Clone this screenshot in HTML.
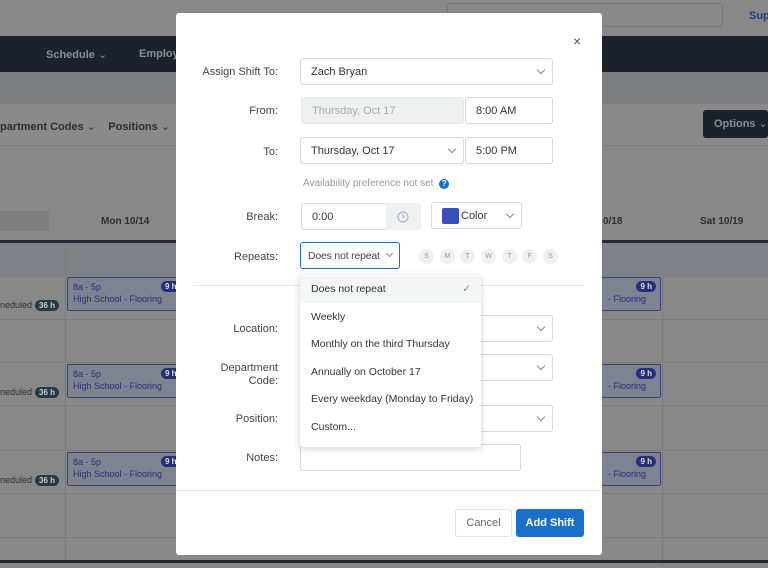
<!DOCTYPE html>
<html><head><style>
*{box-sizing:border-box;margin:0;padding:0}
body{width:768px;height:568px;position:relative;overflow:hidden;background:#888;font-family:"Liberation Sans",sans-serif;font-size:11px;color:#333}
.abs{position:absolute}
.bg{color:#2a2f36}
.inp{position:absolute;border:1px solid #d6d8db;border-radius:3px;background:#fff;height:27px;padding:0 10px;line-height:26px;font-size:11px;color:#333}
.lbl{position:absolute;right:0;text-align:right;font-size:11px;color:#444}
.chev{position:absolute;right:8px;top:8px;width:6px;height:6px;border-right:1px solid #888;border-bottom:1px solid #888;transform:rotate(45deg)}
.day{position:absolute;top:236px;width:15px;height:15px;border-radius:50%;background:#eef0f2;color:#999;font-size:7px;text-align:center;line-height:15px}
.opt{position:absolute;left:0;width:181px;height:27px;padding-left:11px;line-height:27px;font-size:10.5px;color:#333}
.shift{position:absolute;width:124px;height:34px;border:1px solid #3a4480;border-radius:2px;background:#7f8290;font-size:9px;color:#26307a;padding:3px 5px;line-height:12px}
.shift b{position:absolute;left:93px;top:3px;background:#26307a;color:#ddd;border-radius:7px;padding:0 4px;font-size:8px;line-height:11px}
.shift.r b{left:auto;right:4px}
.sch{position:absolute;left:0;font-size:9px;color:#2a2f36}
.sch b{background:#243a44;color:#ccc;border-radius:7px;padding:1px 4px;font-size:8px;margin-left:3px}
</style></head><body>
<div class="abs" style="left:447px;top:3px;width:276px;height:24px;border:1px solid #777;border-radius:3px"></div>
<div class="abs" style="left:749px;top:10px;color:#1f3a8a;font-size:11px;font-weight:bold">Sup</div>
<div class="abs" style="left:0;top:36px;width:768px;height:36px;background:#1c222b"></div>
<div class="abs" style="left:46px;top:48px;color:#8a8d92;font-size:11px;font-weight:bold">Schedule <span style="font-weight:normal">&#8964;</span></div>
<div class="abs" style="left:139px;top:48px;color:#8a8d92;font-size:11px;font-weight:bold">Employ</div>
<div class="abs" style="left:68px;top:72px;width:0;height:0;border-left:10px solid transparent;border-right:10px solid transparent;border-top:8px solid #1c222b"></div>
<div class="abs" style="left:0;top:72px;width:768px;height:32px;background:#7d7f82"></div>
<div class="abs" style="left:0;top:104px;width:768px;height:42px;background:#8a8a8a;border-bottom:1px solid #7e7e7e"></div>
<div class="abs bg" style="left:0;top:120px;font-size:11px;font-weight:bold">partment Codes <span style="font-weight:normal">&#8964;</span>&nbsp;&nbsp;&nbsp; Positions <span style="font-weight:normal">&#8964;</span></div>
<div class="abs" style="left:703px;top:110px;width:65px;height:28px;background:#1c222b;border-radius:3px;color:#8a8d92;font-size:11px;font-weight:bold;line-height:28px;padding-left:11px">Options <span style="font-weight:normal">&#8964;</span></div>
<div class="abs" style="left:0;top:211px;width:49px;height:20px;background:#7d7e80"></div>
<div class="abs bg" style="left:101px;top:216px;font-weight:bold;font-size:10px">Mon 10/14</div>
<div class="abs bg" style="left:603px;top:216px;font-weight:bold;font-size:10px">0/18</div>
<div class="abs bg" style="left:700px;top:216px;font-weight:bold;font-size:10px">Sat 10/19</div>
<div class="abs" style="left:0;top:240px;width:768px;height:3px;background:#222a33"></div>
<div class="abs" style="left:0;top:243px;width:768px;height:34px;background:#7f8186"></div>
<div class="abs" style="left:65px;top:243px;width:1px;height:320px;background:#7a7a7a"></div>
<div class="abs" style="left:662px;top:277px;width:1px;height:290px;background:#7a7a7a"></div>
<div class="abs" style="left:0;top:319px;width:768px;height:1px;background:#7c7c7c"></div>
<div class="abs" style="left:0;top:362px;width:768px;height:1px;background:#7c7c7c"></div>
<div class="abs" style="left:0;top:405px;width:768px;height:1px;background:#7c7c7c"></div>
<div class="abs" style="left:0;top:450px;width:768px;height:1px;background:#7c7c7c"></div>
<div class="abs" style="left:0;top:493px;width:768px;height:1px;background:#7c7c7c"></div>
<div class="abs" style="left:0;top:537px;width:768px;height:1px;background:#7c7c7c"></div>
<div class="abs" style="left:0;top:560px;width:768px;height:3px;background:#222a33"></div>
<div class="sch" style="top:300px">neduled<b>36 h</b></div>
<div class="sch" style="top:387px">neduled<b>36 h</b></div>
<div class="sch" style="top:475px">neduled<b>36 h</b></div>
<div class="shift" style="left:67px;top:277px">8a - 5p<br>High School - Flooring<b>9 h</b></div>
<div class="shift" style="left:67px;top:364px">8a - 5p<br>High School - Flooring<b>9 h</b></div>
<div class="shift" style="left:67px;top:452px">8a - 5p<br>High School - Flooring<b>9 h</b></div>
<div class="shift r" style="left:537px;top:277px"><span style="position:absolute;left:70px;top:15px">- Flooring</span><b>9 h</b></div>
<div class="shift r" style="left:537px;top:364px"><span style="position:absolute;left:70px;top:15px">- Flooring</span><b>9 h</b></div>
<div class="shift r" style="left:537px;top:452px"><span style="position:absolute;left:70px;top:15px">- Flooring</span><b>9 h</b></div>

<div class="abs" style="left:176px;top:13px;width:426px;height:542px;background:#fff;border-radius:3px">
<div class="abs" style="left:397px;top:20px;font-size:14px;color:#555">&#215;</div>
<div class="abs" style="left:0;top:1px;width:102px;height:500px">
 <div class="lbl" style="top:52px">Assign Shift To:</div>
 <div class="lbl" style="top:91px">From:</div>
 <div class="lbl" style="top:132px">To:</div>
 <div class="lbl" style="top:197px">Break:</div>
 <div class="lbl" style="top:237px">Repeats:</div>
 <div class="lbl" style="top:309px">Location:</div>
 <div class="lbl" style="top:348px;line-height:13px">Department<br>Code:</div>
 <div class="lbl" style="top:399px">Position:</div>
 <div class="lbl" style="top:438px">Notes:</div>
</div>
<div class="inp" style="left:124px;top:45px;width:253px">Zach Bryan<div class="chev"></div></div>
<div class="inp" style="left:125px;top:84px;width:163px;background:#eef0f2;color:#aaa;border-color:#e6e8ea">Thursday, Oct 17</div>
<div class="inp" style="left:289px;top:84px;width:88px">8:00 AM</div>
<div class="inp" style="left:124px;top:124px;width:164px">Thursday, Oct 17<div class="chev"></div></div>
<div class="inp" style="left:289px;top:124px;width:88px">5:00 PM</div>
<div class="abs" style="left:127px;top:165px;color:#999;font-size:10px">Availability preference not set <span style="display:inline-block;width:10px;height:10px;border-radius:50%;background:#1a6fc9;color:#fff;font-size:8px;text-align:center;line-height:10px;font-weight:bold;margin-left:3px">?</span></div>
<div class="inp" style="left:125px;top:190px;width:86px">0:00</div>
<div class="abs" style="left:210px;top:190px;width:35px;height:27px;background:#eef0f2;border-radius:0 3px 3px 0"><svg width="35" height="27"><circle cx="17" cy="14" r="5" fill="none" stroke="#9ab0d0" stroke-width="1"/><path d="M17 11v3h2" fill="none" stroke="#9ab0d0"/></svg></div>
<div class="inp" style="left:255px;top:189px;width:91px;padding-left:10px"><span style="display:inline-block;width:17px;height:16px;background:#3a4db8;border-radius:2px;vertical-align:middle;margin-right:2px"></span>Color<div class="chev"></div></div>
<div class="inp" style="left:124px;top:229px;width:100px;border-color:#1a6fc9;padding-left:7px;color:#444;font-size:10.5px;letter-spacing:-0.2px">Does not repeat<div class="chev" style="right:7px;width:5px;height:5px"></div></div>
<div class="day" style="left:243px">S</div><div class="day" style="left:264px">M</div><div class="day" style="left:284px">T</div><div class="day" style="left:305px">W</div><div class="day" style="left:326px">T</div><div class="day" style="left:346px">F</div><div class="day" style="left:367px">S</div>
<div class="abs" style="left:17px;top:272px;width:391px;height:1px;background:#e6e6e6"></div>
<div class="inp" style="left:124px;top:302px;width:253px"><div class="chev"></div></div>
<div class="inp" style="left:124px;top:341px;width:253px"><div class="chev"></div></div>
<div class="inp" style="left:124px;top:392px;width:253px"><div class="chev"></div></div>
<div class="inp" style="left:124px;top:431px;width:221px"></div>
<div class="abs" style="left:0;top:477px;width:426px;height:1px;background:#e6e6e6"></div>
<div class="abs" style="left:279px;top:496px;width:57px;height:28px;border:1px solid #e2e2e2;border-radius:3px;color:#5a6a80;font-size:11px;text-align:center;line-height:26px">Cancel</div>
<div class="abs" style="left:340px;top:496px;width:68px;height:28px;background:#1a6fc9;border-radius:3px;color:#fff;font-size:11px;font-weight:bold;text-align:center;line-height:28px">Add Shift</div>
<div class="abs" style="left:124px;top:262px;width:181px;height:172px;background:#fff;box-shadow:0 2px 8px rgba(0,0,0,.18);border-radius:3px">
 <div class="opt" style="top:1px;background:#f4f5f6">Does not repeat<span style="position:absolute;right:10px;color:#888">&#10003;</span></div>
 <div class="opt" style="top:29px">Weekly</div>
 <div class="opt" style="top:56px">Monthly on the third Thursday</div>
 <div class="opt" style="top:84px">Annually on October 17</div>
 <div class="opt" style="top:111px">Every weekday (Monday to Friday)</div>
 <div class="opt" style="top:139px">Custom...</div>
</div>
</div>
</body></html>
